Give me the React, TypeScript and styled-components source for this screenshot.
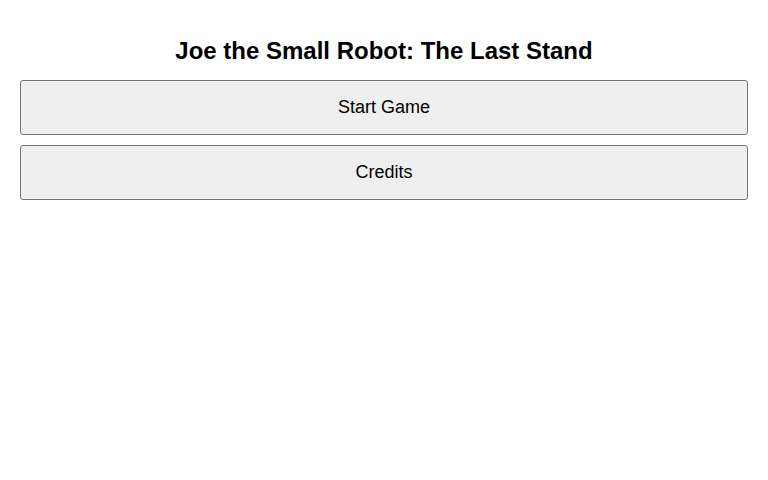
import styled, { createGlobalStyle } from 'styled-components';

const GlobalStyle = createGlobalStyle`
    body {
        margin: 0;
        background: #fff;
        font-family: "Liberation Sans", Arial, sans-serif;
    }
`;

const Menu = styled.div`
    display: flex;
    flex-direction: column;
    gap: 10px;
    padding: 20px;
`;

const Title = styled.h1`
    margin: 17px 0 5px;
    font-size: 24px;
    line-height: 28px;
    font-weight: bold;
    text-align: center;
    color: #000;
`;

const MenuButton = styled.button`
    height: 55px;
    width: 100%;
    background: #efefef;
    border: 1px solid #767676;
    border-radius: 3px;
    font-family: "Liberation Sans", Arial, sans-serif;
    font-size: 18px;
    color: #000;
    cursor: pointer;

    &:hover {
        background: #e5e5e5;
    }
`;

export default function App() {
    const items = ['Start Game', 'Credits'];
    return (
        <>
            <GlobalStyle />
            <Menu>
                <Title>Joe the Small Robot: The Last Stand</Title>
                {items.map(label => (
                    <MenuButton key={label}>{label}</MenuButton>
                ))}
            </Menu>
        </>
    );
}
